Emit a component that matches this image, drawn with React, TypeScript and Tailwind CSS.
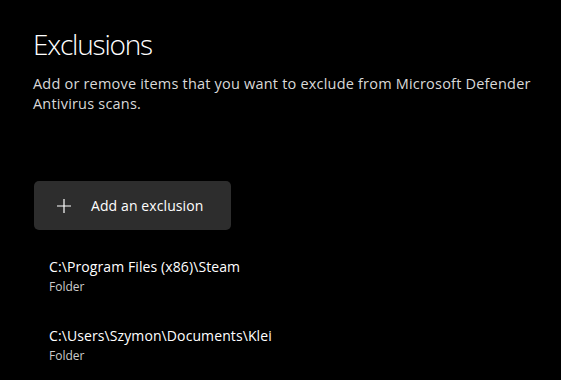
const exclusions = [
  { path: "C:\\Program Files (x86)\\Steam", kind: "Folder" },
  { path: "C:\\Users\\Szymon\\Documents\\Klei", kind: "Folder" },
];

export default function App() {
  return (
    <div className="w-[561px] h-[380px] bg-black text-white overflow-hidden font-['Open_Sans',sans-serif]">
      <div className="pl-[33px] pt-[26px]">
        <h1 className="text-[28px] leading-[36px] font-light tracking-[-1.2px]">Exclusions</h1>
        <p className="mt-[12px] text-[14.5px] leading-[20px] text-[#d9d9d9] tracking-[0.2px] w-[515px]">
          Add or remove items that you want to exclude from Microsoft Defender Antivirus scans.
        </p>
      </div>
      <div className="pl-[34px] mt-[67px]">
        <button className="flex items-center w-[197px] h-[49px] rounded-[5px] bg-[#2d2d2d] text-[14px] tracking-[0.1px]">
          <svg width="16" height="16" viewBox="0 0 16 16" className="ml-[22px]">
            <path d="M8 1v14M1 8h14" stroke="white" strokeWidth="1.2" />
          </svg>
          <span className="ml-[19px]">Add an exclusion</span>
        </button>
      </div>
      <div className="pl-[49px] mt-[27px] flex flex-col gap-[30px]">
        {exclusions.map((e) => (
          <div key={e.path}>
            <div className="text-[14px] leading-[20px] tracking-[0.1px]">{e.path}</div>
            <div className="mt-[1px] text-[12px] leading-[18px] text-[#cccccc]">{e.kind}</div>
          </div>
        ))}
      </div>
    </div>
  );
}
